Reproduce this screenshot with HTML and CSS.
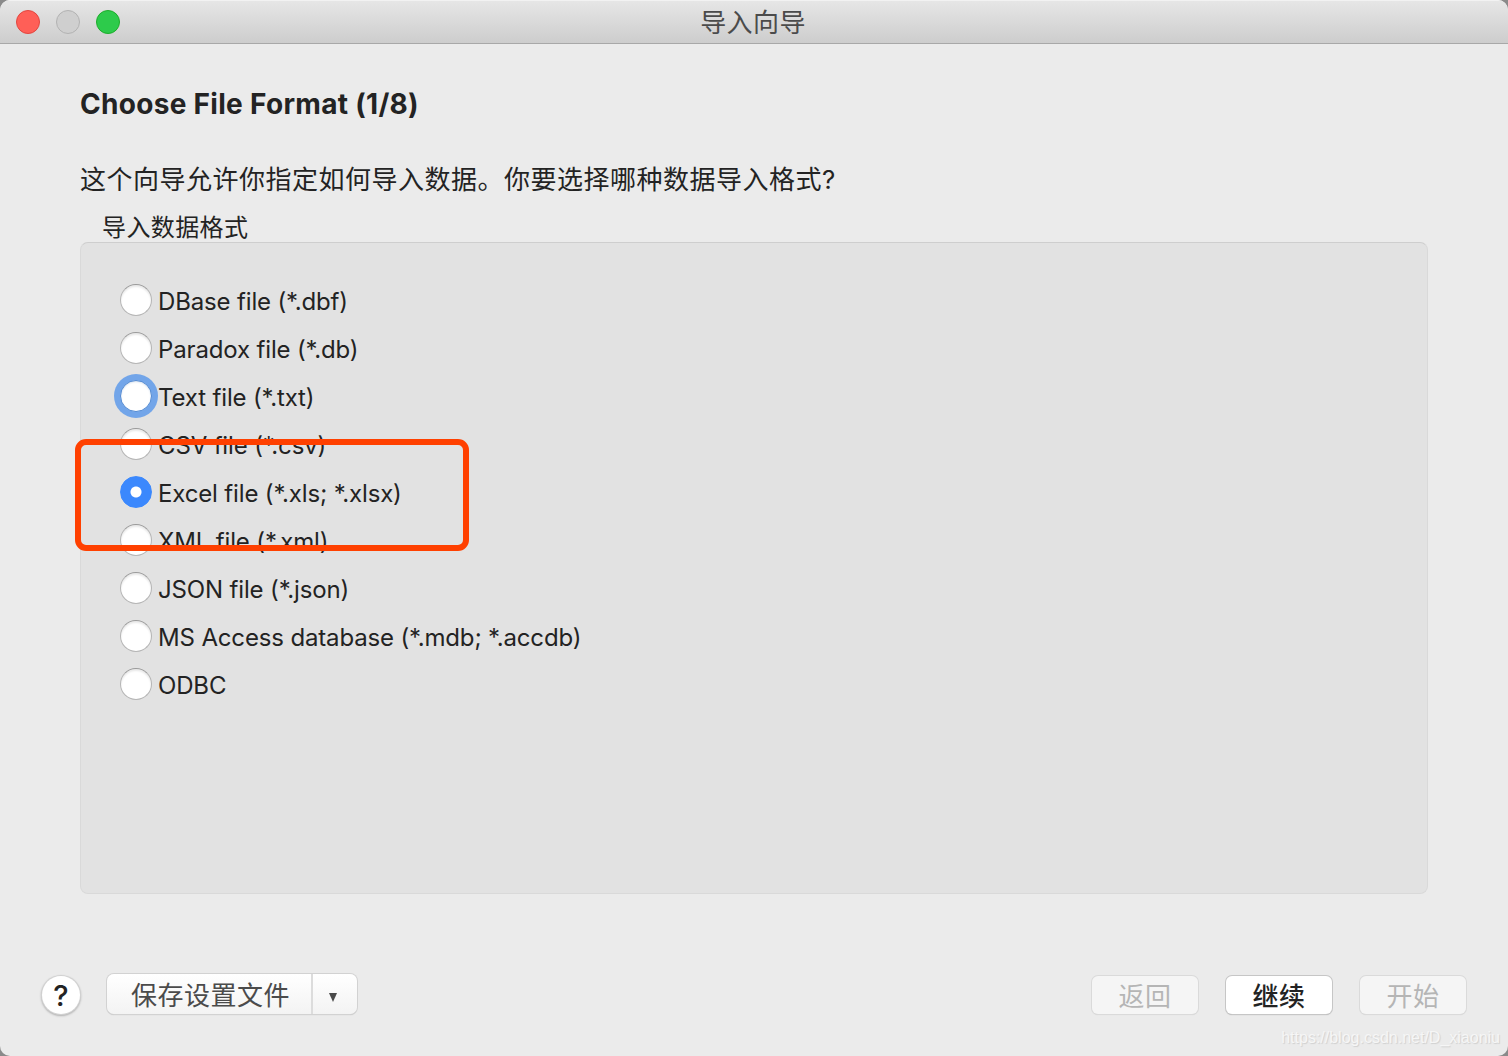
FILE: index.html
```html
<!DOCTYPE html>
<html lang="zh-CN">

<head>
    <meta charset="UTF-8">
    <meta name="viewport" content="width=device-width, initial-scale=1.0">
    <title>导入向导</title>
    <link rel="stylesheet" href="styles.css">
</head>

<body>
    <div class="window">

        <!-- ----------- title bar ---------------- -->

        <div class="titlebar">
            <div class="lights">
                <span class="light close"></span>
                <span class="light minimize"></span>
                <span class="light maximize"></span>
            </div>
            <div class="title">导入向导</div>
        </div>

        <!-- ----------- content ---------------- -->

        <div class="content">
            <h1>Choose File Format (1/8)</h1>
            <p class="intro">这个向导允许你指定如何导入数据。你要选择哪种数据导入格式?</p>
            <div class="group-label">导入数据格式</div>

            <div class="group">
                <label class="option"><input type="radio" name="format"><span>DBase file (*.dbf)</span></label>
                <label class="option"><input type="radio" name="format"><span>Paradox file (*.db)</span></label>
                <label class="option"><input type="radio" name="format" class="focus"><span>Text file (*.txt)</span></label>
                <label class="option"><input type="radio" name="format"><span>CSV file (*.csv)</span></label>
                <label class="option"><input type="radio" name="format" checked><span>Excel file (*.xls; *.xlsx)</span></label>
                <label class="option"><input type="radio" name="format"><span>XML file (*.xml)</span></label>
                <label class="option"><input type="radio" name="format"><span>JSON file (*.json)</span></label>
                <label class="option"><input type="radio" name="format"><span>MS Access database (*.mdb; *.accdb)</span></label>
                <label class="option"><input type="radio" name="format"><span>ODBC</span></label>
                <div class="highlight"></div>
            </div>
        </div>

        <!-- ----------- footer ---------------- -->

        <div class="footer">
            <button class="help">?</button>
            <div class="split">
                <button class="save">保存设置文件</button>
                <button class="arrow">
                    <svg width="8" height="9" viewBox="0 0 8 9"><path d="M0 0h8L4 9z" fill="#4a4a4a"/></svg>
                </button>
            </div>
            <div class="nav">
                <button class="btn" disabled>返回</button>
                <button class="btn">继续</button>
                <button class="btn" disabled>开始</button>
            </div>
        </div>

        <div class="watermark">https://blog.csdn.net/D_xiaoniu</div>
    </div>
</body>

</html>
```
FILE: styles.css
```css
* {
    box-sizing: border-box;
    padding: 0;
    margin: 0;
}

body {
    background: #8a8a8a;
    font-family: Inter, "Noto Sans CJK SC", sans-serif;
    color: #232323;
    overflow: hidden;
}

button {
    font-family: inherit;
    border: none;
}

.window {
    position: relative;
    display: flex;
    flex-direction: column;
    height: 1056px;
    background: #ebebeb;
    border-radius: 10px;
    overflow: hidden;
}

/* title bar */

.titlebar {
    display: grid;
    grid-template-columns: 200px 1fr 200px;
    align-items: center;
    height: 44px;
    background: linear-gradient(to bottom, #e6e6e6, #cdcdcd);
    border-top: 1px solid #f2f2f2;
    border-bottom: 1px solid #a8a8a8;
}

.lights {
    display: flex;
    gap: 16px;
    padding-left: 16px;
}

.light {
    width: 24px;
    height: 24px;
    border-radius: 50%;
    border: 1px solid;
}

.close {
    background: #ff5f57;
    border-color: #e2463f;
}

.minimize {
    background: #cfcfcf;
    border-color: #b2b2b2;
}

.maximize {
    background: #2dcb4b;
    border-color: #1dad2b;
}

.title {
    text-align: center;
    padding: 2px 2px 0 0;
    font-size: 26px;
    line-height: 40px;
    letter-spacing: 0.4px;
    color: #4b4b4b;
}

/* content */

.content {
    padding: 40px 80px 0;
}

h1 {
    font-size: 28px;
    line-height: 40px;
    font-weight: 700;
    letter-spacing: 0.3px;
}

.intro {
    margin-top: 36px;
    font-size: 26px;
    line-height: 40px;
    letter-spacing: 0.5px;
}

.group-label {
    margin-top: 13px;
    padding-left: 22px;
    font-size: 24px;
    line-height: 30px;
    letter-spacing: 0.4px;
}

.group {
    position: relative;
    height: 652px;
    margin-top: -1px;
    padding: 33px 39px;
    background: #e2e2e2;
    border: 1px solid #d9d9d9;
    border-top-color: #cecece;
    border-radius: 8px;
}

.option {
    display: flex;
    align-items: center;
    height: 48px;
    font-size: 24px;
    letter-spacing: -0.15px;
}

.option span {
    padding: 3px 0 0 6px;
    white-space: nowrap;
}

.option input {
    appearance: none;
    width: 32px;
    height: 32px;
    border-radius: 50%;
    background: #fff;
    border: 1px solid #b5b5b5;
    border-top-color: #999;
    box-shadow: inset 0 2px 2px #e9e9e9;
}

.option input:checked {
    background: radial-gradient(circle, #fff 5px, #3b88fd 6px);
    border-color: #3b88fd;
    box-shadow: none;
}

.option .focus {
    border-color: #5189d2;
    box-shadow: 0 0 0 6px #72a5e9, inset 0 1px 2px #d5dfec;
}

/* red marker around the excel option */
.highlight {
    position: absolute;
    left: -6px;
    top: 196px;
    width: 394px;
    height: 112px;
    border: 6px solid #ff4000;
    border-radius: 11px;
}

/* footer */

.footer {
    display: flex;
    align-items: center;
    height: 44px;
    margin-top: 79px;
    padding: 0 42px;
}

.help {
    width: 38px;
    height: 38px;
    border-radius: 50%;
    background: #fff;
    box-shadow: 0 0 0 1px #d2d2d2, 0 1px 2px 1px #b0b0b0;
    font-size: 29px;
    font-weight: 500;
    line-height: 40px;
    color: #232323;
}

.split {
    display: flex;
    width: 250px;
    height: 40px;
    margin: -2px 0 0 27px;
    border-radius: 7px;
    background: linear-gradient(to bottom, #fff, #f3f3f3);
    box-shadow: 0 0 0 1px #d2d2d2, 0 1px 1px 0 #b5b5b5;
}

.save {
    width: 206px;
    padding: 2px 0 0 3px;
    background: none;
    border-right: 2px solid #dcdcdc;
    font-size: 26px;
    line-height: 40px;
    letter-spacing: 0.5px;
    color: #4b4b4b;
}

.arrow {
    flex: 1;
    padding: 7px 4px 0 0;
    background: none;
}

.arrow svg {
    display: block;
    margin: 0 auto;
}

.nav {
    display: flex;
    gap: 28px;
    margin-left: auto;
}

.btn {
    width: 106px;
    height: 38px;
    padding-top: 2px;
    border-radius: 6px;
    background: #fff;
    box-shadow: 0 0 0 1px #c6c6c6, 0 1px 1px 0 #a5a5a5;
    font-size: 26px;
    font-weight: 500;
    line-height: 38px;
    letter-spacing: 0.5px;
    color: #232323;
}

.btn:disabled {
    background: #f5f5f5;
    box-shadow: 0 0 0 1px #dadada, 0 1px 1px 0 #d0d0d0;
    font-weight: 400;
    color: #b5b5b5;
}

.watermark {
    position: absolute;
    right: 8px;
    bottom: 8px;
    font: 16px/20px "Liberation Sans", sans-serif;
    color: #f6f6f6;
    text-shadow: 1px 1px 1px #cfcfcf;
}
```
